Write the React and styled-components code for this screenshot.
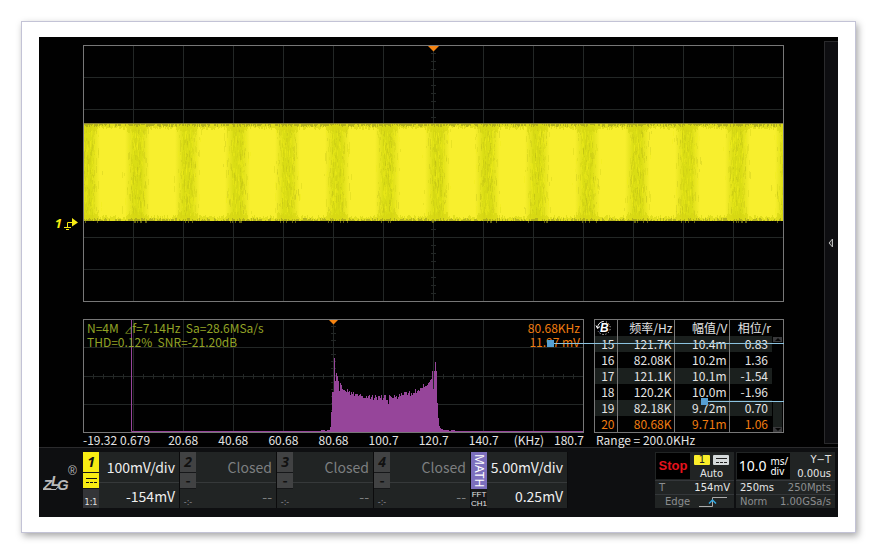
import React from "react";
import styled, { createGlobalStyle } from "styled-components";

const GlobalStyle = createGlobalStyle`
  * {
    box-sizing: border-box;
  }
  body {
    margin: 0;
    background: #fff;
    font-family: "Noto Sans CJK SC", "Noto Sans", sans-serif;
  }
  button {
    margin: 0;
    padding: 0;
    border: 0;
    background: none;
    color: inherit;
    font: inherit;
    cursor: pointer;
  }
`;

// small seeded generator so the traces look the same on every load
const seeded = (seed) => () => {
    seed = (seed * 1664525 + 1013904223) % 4294967296;
    return seed / 4294967296;
};

const range = (n) => Array.from({ length: n }, (_, i) => i);

/* ---------- time domain trace ---------- */
const buildWave = () => {
    const rnd = seeded(7);
    const shades = { soft: "", mid: "", bright: "", top: "", bottom: "", olive: "" };
    range(15).forEach((band) => {
        const center = band * 50 + 4;
        range(240).forEach(() => {
            const x = Math.round(center + (rnd() + rnd() + rnd() - 1.5) * 11);
            const y = Math.round(80 + rnd() * 88);
            const h = Math.round(2 + rnd() * 6);
            if (x < 1 || x > 699) return;
            const pick = rnd();
            const key = pick < 0.5 ? "soft" : pick < 0.7 ? "mid" : "bright";
            shades[key] += `M${x} ${y}v${h}`;
        });
    });
    range(699).forEach((i) => {
        const x = i + 1;
        const near = Math.abs(((x + 21) % 50) - 25) < 11 ? 3 : 0;
        shades.top += `M${x} 79v${Math.round(2 + rnd() * 4 + near)}`;
        shades.bottom += `M${x} 176v-${Math.round(2 + rnd() * 4 + near)}`;
        if (rnd() < 0.7) shades.olive += `M${x} 79v${Math.round(1 + rnd() * 2)}M${x} 176v-${Math.round(1 + rnd() * 2)}`;
        if (near && rnd() < 0.2) shades.olive += `M${x} 176v2`;
    });
    return shades;
};
const wave = buildWave();

const WavePlot = () => (
    <WaveSvg viewBox="0 0 701 257" preserveAspectRatio="none" role="img" aria-label="CH1">
        <defs>
            <linearGradient id="band" x1="0" x2="1">
                <stop offset="0" stopColor="#dadd14" stopOpacity="0" />
                <stop offset="0.35" stopColor="#dadd14" />
                <stop offset="0.65" stopColor="#dadd14" />
                <stop offset="1" stopColor="#dadd14" stopOpacity="0" />
            </linearGradient>
            <clipPath id="trace"><rect x="1" y="78" width="699" height="98" /></clipPath>
        </defs>
        <g fill="none" stroke="#232726">
            {range(13).map((i) => <path key={i} d={`M${(i + 1) * 50 + 0.5} 0V257`} />)}
            {range(7).map((i) => <path key={i} d={`M0 ${(i + 1) * 32 + 0.5}H701`} />)}
            {range(31).map((i) => <path key={i} d={`M348 ${(i + 1) * 8 + 0.5}h5`} />)}
        </g>
        <rect x="1" y="78" width="699" height="98" fill="#f8ef2e" />
        <g clipPath="url(#trace)">
            {range(15).map((i) => <rect key={i} x={i * 50 - 8} y="78" width="25" height="98" fill="url(#band)" />)}
        </g>
        <g fill="none" strokeWidth="1" transform="translate(0.5 0)">
            <path d={wave.soft} stroke="#cdce14" strokeOpacity="0.35" />
            <path d={wave.mid} stroke="#b9bb16" strokeOpacity="0.3" />
            <path d={wave.bright} stroke="#efee1a" strokeOpacity="0.4" />
            <path d={wave.top} stroke="#d6d512" strokeOpacity="0.65" />
            <path d={wave.bottom} stroke="#d6d512" strokeOpacity="0.65" />
            <path d={wave.olive} stroke="#9a981c" strokeOpacity="0.6" />
        </g>
        <path d="M0 78.5H701" stroke="#8d8538" />
        <rect x="0.5" y="0.5" width="700" height="256" fill="none" stroke="#777" />
        <path d="M345 1h11l-5.500 5.500z" fill="#f58412" />
    </WaveSvg>
);

/* ---------- spectrum ---------- */
const envelope = [
    [247, 108], [248, 93], [249, 73], [250, 73], [251, 39], [252, 62], [253, 54], [254, 57], [255, 62],
    [256, 72], [257, 64], [259, 70], [264, 71], [268, 74], [274, 76], [282, 77], [292, 78], [302, 78],
    [310, 78], [318, 76], [324, 74], [330, 73], [335, 71], [340, 67], [344, 64], [347, 61], [348, 60], [349, 52],
    [350, 70], [351, 52], [352, 43], [353, 52], [354, 84], [355, 99], [356, 107], [358, 110], [361, 111],
];
const buildSpectrum = () => {
    const rnd = seeded(23);
    let d = "";
    for (let x = 247; x <= 361; x++) {
        const next = envelope.findIndex((p) => p[0] >= x);
        const b = envelope[next];
        const a = envelope[Math.max(0, next - 1)];
        const t = b[0] === a[0] ? 0 : (x - a[0]) / (b[0] - a[0]);
        const noise = x > 257 && x < 347 ? rnd() * 5 - 2 : 0;
        const drop = x > 285 && x < 330 && rnd() < 0.12 ? 4 : 0;
        d += `M${x}.5 112V${Math.round(a[1] + (b[1] - a[1]) * t + noise + drop)}`;
    }
    return d;
};
const spectrum = buildSpectrum();

const SpectrumPlot = () => (
    <SpectrumSvg viewBox="0 0 501 114" preserveAspectRatio="none" role="img" aria-label="FFT">
        <g fill="none" stroke="#232726">
            {range(9).map((i) => <path key={i} d={`M${(i + 1) * 50 + 0.5} 0V113`} />)}
            {[28, 57, 85].map((y) => <path key={y} d={`M0 ${y}.5H501`} />)}
            {range(49).map((i) => <path key={i} d={`M${(i + 1) * 10 + 0.5} 55v5`} />)}
            {range(15).map((i) => <path key={i} d={`M248 ${(i + 1) * 7 + 0.5}h5`} />)}
        </g>
        <path d={spectrum} stroke="#96459a" />
        <rect x="0.5" y="0.5" width="500" height="113" fill="none" stroke="#777" />
        <path d="M48.500 1V112.500H500" fill="none" stroke="#96459a" />
        <path d="M238 111.500h9M362 111.500h10" stroke="#96459a" strokeDasharray="4 2" />
        <path d="M246 1h9l-4.500 4.500z" fill="#f58412" />
    </SpectrumSvg>
);

const ticks = ["-19.32", "0.679", "20.68", "40.68", "60.68", "80.68", "100.7", "120.7", "140.7", "(KHz)", "180.7"];

const harmonics = [
    ["15", "121.7K", "10.4m", "0.83"],
    ["16", "82.08K", "10.2m", "1.36"],
    ["17", "121.1K", "10.1m", "-1.54"],
    ["18", "120.2K", "10.0m", "-1.96"],
    ["19", "82.18K", "9.72m", "0.70"],
    ["20", "80.68K", "9.71m", "1.06"],
];

const KnobIcon = () => (
    <svg width="18" height="16" viewBox="0 0 18 16" aria-hidden="true">
        <path d="M2.500 8Q3 2.500 8 1.500M1 5.500l1.500 3l2.500-2" fill="none" stroke="#fff" />
        <path d="M8 1.500A6.500 6.500 0 1 1 3 11" fill="none" stroke="#fff" strokeDasharray="1 2" />
        <text x="5" y="12" fill="#fff" fontFamily="Liberation Sans" fontWeight="700" fontStyle="italic" fontSize="12">B</text>
    </svg>
);

const HarmonicTable = () => (
    <TableBox>
        <Table>
            <thead>
                <tr>
                    <Th $w="22px"><KnobIcon /></Th>
                    <Th $w="57px">频率/Hz</Th>
                    <Th $w="55px">幅值/V</Th>
                    <Th>相位/r</Th>
                </tr>
            </thead>
            <tbody>
                {harmonics.map((row, i) => (
                    <Row key={row[0]} $odd={i % 2 === 0} $active={i === 5}>
                        {row.map((cell, c) => <Td key={c}>{cell}</Td>)}
                    </Row>
                ))}
            </tbody>
        </Table>
        <Scrollbar>
            <ScrollButton aria-label="Up"><svg width="6" height="3"><path d="M0 3L3 0L6 3z" fill="#050505" /></svg></ScrollButton>
            <Thumb />
            <ScrollButton aria-label="Down"><svg width="6" height="3"><path d="M0 0L3 3L6 0z" fill="#050505" /></svg></ScrollButton>
        </Scrollbar>
    </TableBox>
);

const DcIcon = ({ color }) => (
    <svg width="13" height="7" viewBox="0 0 13 7" aria-hidden="true">
        <path d="M1 1.500h11M1 5.500h3M5 5.500h3M9 5.500h3" stroke={color} />
    </svg>
);

const Channel = ({ id, on, scale, offset, ratio }) => (
    <ChannelBox>
        <Badges>
            <BadgeButton $on={on}>{id}</BadgeButton>
            <Coupling $on={on}>{on ? <DcIcon color="#111" /> : "-"}</Coupling>
            <Ratio $on={on}>{ratio}</Ratio>
        </Badges>
        <Values>
            <Value $on={on}>{scale}</Value>
            <Value $on={on}>{offset}</Value>
        </Values>
    </ChannelBox>
);

const Logo = () => (
    <LogoBox>
        <svg width="36" height="30" viewBox="0 0 36 30" role="img" aria-label="ZLG">
            <g fill="#b9b9b9" fontFamily="Liberation Sans" fontStyle="italic" fontWeight="700">
                <text x="0" y="26" fontSize="15">Z</text>
                <text x="8" y="22" fontSize="15">L</text>
                <text x="14" y="26" fontSize="15">G</text>
            </g>
            <path d="M0 25.500h13l2-3" fill="none" stroke="#b9b9b9" />
            <text x="25" y="11" fill="#b9b9b9" fontFamily="Liberation Sans" fontSize="12">®</text>
        </svg>
    </LogoBox>
);

const App = () => (
    <Page>
        <GlobalStyle />
        <Frame>
            <Screen>
                <Upper>
                    <Gutter>
                        <GroundMark>1</GroundMark>
                        <svg width="15" height="14" viewBox="0 0 15 14" aria-hidden="true">
                            <path d="M1 9.500h7M3 11.500h3M4.500 9V4.500H10" fill="none" stroke="#f7ec13" />
                            <path d="M9 0l6 4.500l-6 4z" fill="#f7ec13" />
                        </svg>
                    </Gutter>
                    <Plots>
                        <WavePlot />
                        <Lower>
                            <div>
                                <SpectrumBox>
                                    <SpectrumPlot />
                                    <Info>
                                        <span>N=4M&nbsp; <Delta>⊿</Delta>f=7.14Hz&nbsp; Sa=28.6MSa/s<br />THD=0.12%&nbsp; SNR=-21.20dB</span>
                                        <Peak>80.68KHz<br />11.97 mV</Peak>
                                    </Info>
                                </SpectrumBox>
                                <Axis>
                                    {ticks.map((t) => <Tick key={t}>{t}</Tick>)}
                                </Axis>
                            </div>
                            <div>
                                <HarmonicTable />
                                <RangeLabel>Range = 200.0KHz</RangeLabel>
                            </div>
                            <Leader $top="24px" $width="234px" />
                            <Leader $top="82px" $width="80px" />
                        </Lower>
                    </Plots>
                    <Drawer aria-label="Open menu">
                        <svg width="6" height="10" viewBox="0 0 6 10"><path d="M4.500 1L1 5l3.500 4z" fill="#333" stroke="#bbb" /></svg>
                    </Drawer>
                </Upper>
                <StatusBar>
                    <Logo />
                    <Channel id="1" on scale="100mV/div" offset="-154mV" ratio="1:1" />
                    <Channel id="2" scale="Closed" offset="--" ratio="-:-" />
                    <Channel id="3" scale="Closed" offset="--" ratio="-:-" />
                    <Channel id="4" scale="Closed" offset="--" ratio="-:-" />
                    <ChannelBox>
                        <Badges>
                            <MathButton>MATH</MathButton>
                            <MathSource><span>FFT</span><span>CH1</span></MathSource>
                        </Badges>
                        <Values>
                            <Value $on>5.00mV/div</Value>
                            <Value $on>0.25mV</Value>
                        </Values>
                    </ChannelBox>
                    <Panels>
                        <Panel $w="79px">
                            <PanelTop>
                                <StopButton>Stop</StopButton>
                                <TriggerMode>
                                    <TriggerTags>
                                        <Tag $bg="#fbee2a">1</Tag>
                                        <Tag $bg="#d5dadb"><DcIcon color="#222" /></Tag>
                                    </TriggerTags>
                                    Auto
                                </TriggerMode>
                            </PanelTop>
                            <PanelRow><Dim>T</Dim><span>154mV</span></PanelRow>
                            <PanelRow $inset>
                                <Dim>Edge</Dim>
                                <svg width="28" height="12" viewBox="0 0 28 12" aria-hidden="true">
                                    <path d="M0 10.500h13.500v-9H28" fill="none" stroke="#aaa" />
                                    <path d="M10 7.500l3.500-3.500l3.500 3.500" fill="none" stroke="#35a8e0" strokeWidth="1.500" />
                                </svg>
                            </PanelRow>
                        </Panel>
                        <Panel $w="99px">
                            <PanelTop>
                                <TimeBase><span>10.0</span><Unit>ms/<br />div</Unit></TimeBase>
                                <Delay>Y−T<br />0.00us</Delay>
                            </PanelTop>
                            <PanelRow><span>250ms</span><Dim>250Mpts</Dim></PanelRow>
                            <PanelRow><Dim>Norm</Dim><Dim>1.00GSa/s</Dim></PanelRow>
                        </Panel>
                    </Panels>
                </StatusBar>
            </Screen>
        </Frame>
    </Page>
);
export default App;

const Page = styled.main`
    padding: 21px 19px 21px 21px;
`;
const Frame = styled.div`
    padding: 15px 17px;
    border: 1px solid #c3c3d6;
    background: #fff;
    box-shadow: 2px 3px 7px rgba(0, 0, 0, 0.35);
`;
const Screen = styled.div`
    background: #010101;
    color: #e4e4e4;
`;
const Upper = styled.div`
    display: flex;
    padding-top: 4px;
`;
const Gutter = styled.div`
    display: flex;
    align-items: flex-start;
    justify-content: flex-end;
    flex: 0 0 44px;
    gap: 1px;
    padding: 177px 5px 0 0;

    svg {
        flex: none;
    }
`;
const GroundMark = styled.span`
    color: #f7ec13;
    font: italic 700 13px/10px "Noto Sans", sans-serif;
`;
const Plots = styled.div`
    flex: 1;
    min-width: 0;
    padding-top: 4px;
`;
const WaveSvg = styled.svg`
    display: block;
    width: 100%;
    height: 257px;
`;
const Lower = styled.div`
    position: relative;
    display: grid;
    grid-template-columns: minmax(0, 1fr) 190px;
    gap: 10px;
    margin-top: 17px;
    font-size: 12px;
    line-height: 14px;
`;
const SpectrumBox = styled.div`
    display: grid;

    > * {
        grid-area: 1 / 1;
    }
`;
const SpectrumSvg = styled.svg`
    display: block;
    width: 100%;
    height: 114px;
`;
const Info = styled.div`
    display: flex;
    justify-content: space-between;
    padding: 2px 4px;
    color: #93a326;
`;
const Delta = styled.span`
    font-size: 8px;
    line-height: 0;
`;
const Peak = styled.span`
    color: #f07d10;
    text-align: right;
`;
const Axis = styled.div`
    display: grid;
    grid-template-columns: 1fr repeat(9, 2fr) 1fr;
`;
const Tick = styled.span`
    display: flex;
    justify-content: center;
    min-width: 0;
    white-space: nowrap;

    &:first-child {
        justify-content: flex-start;
    }
    &:nth-child(2) {
        padding-left: 4px;
    }
    &:nth-child(10) {
        padding-right: 10px;
    }
    &:last-child {
        justify-content: flex-end;
    }
`;
const TableBox = styled.div`
    display: flex;
    height: 114px;
    border: 1px solid #777;
`;
const Table = styled.table`
    flex: 1;
    table-layout: fixed;
    border-collapse: collapse;
`;
const Th = styled.th`
    width: ${(p) => p.$w || "auto"};
    height: 16px;
    padding: 0 1px 0 0;
    border-right: 1px solid #777;
    font-weight: 400;
    text-align: right;
    white-space: nowrap;

    &:last-child {
        border-right: 0;
    }
    svg {
        display: block;
    }
`;
const Row = styled.tr`
    background: ${(p) => (p.$odd ? "#1b201e" : "transparent")};
    color: ${(p) => (p.$active ? "#f07d10" : "inherit")};
`;
const Td = styled.td`
    height: 16px;
    padding: 0 2px 0 0;
    border-right: 1px solid #777;
    text-align: right;

    &:last-child {
        padding-right: 4px;
        border-right: 0;
    }
`;
const Scrollbar = styled.div`
    display: flex;
    flex-direction: column;
    flex: 0 0 11px;
    padding: 17px 1px 0;
`;
const ScrollButton = styled.button`
    display: flex;
    align-items: center;
    justify-content: center;
    height: 5px;
    background: #3a3a3c;
`;
const Thumb = styled.div`
    height: 26px;
    margin-top: auto;
    background: #1b201e;
`;
const RangeLabel = styled.div`
    padding-left: 2px;
`;
const Leader = styled.div`
    position: absolute;
    top: ${(p) => p.$top};
    right: 0;
    width: ${(p) => p.$width};
    height: 1px;
    background: #8cc3e0;

    &::before {
        content: "";
        position: absolute;
        top: -3px;
        left: -3px;
        width: 7px;
        height: 7px;
        background: #569fd3;
    }
`;
const Drawer = styled.button`
    display: flex;
    align-items: center;
    justify-content: center;
    flex: 0 0 14px;
    margin: 0 0 3px 40px;
    padding-right: 2px;
    border: 1px solid #2a2a2c;
    border-right: 0;
    background: #0e0e11;
`;
const StatusBar = styled.footer`
    display: flex;
    padding: 4px 3px 9px 0;
    border-top: 1px solid #2b2b2d;
    background: #0e0f11;
`;
const LogoBox = styled.div`
    flex: 0 0 44px;
    padding: 12px 0 0 4px;
`;
const ChannelBox = styled.section`
    display: flex;
    flex: 0 0 97px;
    height: 56px;
    border-right: 1px solid #0b0b0c;
    background: #212424;
`;
const Badges = styled.div`
    display: flex;
    flex-direction: column;
    flex: 0 0 16px;
    gap: 1px;
    background: #161719;
`;
const BadgeButton = styled.button`
    height: 20px;
    background: ${(p) => (p.$on ? "#f7ec13" : "#414243")};
    color: #111;
    font: italic 700 14px/20px "Noto Sans", sans-serif;
`;
const Coupling = styled.div`
    display: flex;
    align-items: center;
    justify-content: center;
    height: 15px;
    background: ${(p) => (p.$on ? "#f7ec13" : "#414243")};
    color: #111;
    font-size: 14px;
    font-weight: 700;
    line-height: 15px;
`;
const Ratio = styled.div`
    flex: 1;
    padding-top: 8px;
    background: ${(p) => (p.$on ? "#343538" : "#212424")};
    color: ${(p) => (p.$on ? "#e4e4e4" : "#8a8a92")};
    font: 8px/11px "DejaVu Sans", sans-serif;
    text-align: center;
`;
const MathButton = styled.button`
    height: 37px;
    background: #7c6fbd;
    color: #fff;
    font: 12px/16px "Noto Sans", sans-serif;
    writing-mode: vertical-rl;
`;
const MathSource = styled.div`
    display: flex;
    flex-direction: column;
    align-items: center;
    font: 8px/9px "Liberation Sans", sans-serif;
`;
const Values = styled.div`
    flex: 1;
`;
const Value = styled.div`
    height: 30px;
    padding-right: 4px;
    color: ${(p) => (p.$on ? "#eee" : "#7d7f80")};
    font-size: 14px;
    line-height: 30px;
    text-align: right;

    & + & {
        height: 26px;
        border-top: 1px solid #36393a;
        line-height: 26px;
    }
`;
const Panels = styled.div`
    display: flex;
    gap: 2px;
    margin-left: auto;
    font: 10px/14px "DejaVu Sans", sans-serif;
`;
const Panel = styled.section`
    width: ${(p) => p.$w};
    height: 56px;
    background: #212424;
`;
const PanelTop = styled.div`
    display: flex;
    height: 28px;
    padding: 1px;
`;
const StopButton = styled.button`
    flex: 0 0 34px;
    background: #000;
    color: #e5131d;
    font: 700 13px/26px "Liberation Sans", sans-serif;
`;
const TriggerMode = styled.div`
    flex: 1;
    text-align: center;
`;
const TriggerTags = styled.div`
    display: flex;
    justify-content: center;
    gap: 3px;
    padding: 2px 0;
`;
const Tag = styled.span`
    display: flex;
    align-items: center;
    justify-content: center;
    width: 16px;
    height: 10px;
    border-radius: 1px;
    background: ${(p) => p.$bg};
    color: #222;
    line-height: 10px;
`;
const PanelRow = styled.div`
    display: flex;
    align-items: center;
    justify-content: space-between;
    height: 14px;
    padding: ${(p) => (p.$inset ? "1px 7px 0 10px" : "1px 4px 0")};
    border-top: 1px solid #34373a;
`;
const Dim = styled.span`
    color: #8b8d8f;
`;
const TimeBase = styled.div`
    display: flex;
    align-items: center;
    justify-content: center;
    flex: 0 0 53px;
    gap: 4px;
    background: #000;
    color: #fff;
    font: 14px/26px "Noto Sans", sans-serif;
`;
const Unit = styled.span`
    font-size: 10px;
    line-height: 10px;
`;
const Delay = styled.div`
    flex: 1;
    padding-right: 3px;
    text-align: right;
`;
